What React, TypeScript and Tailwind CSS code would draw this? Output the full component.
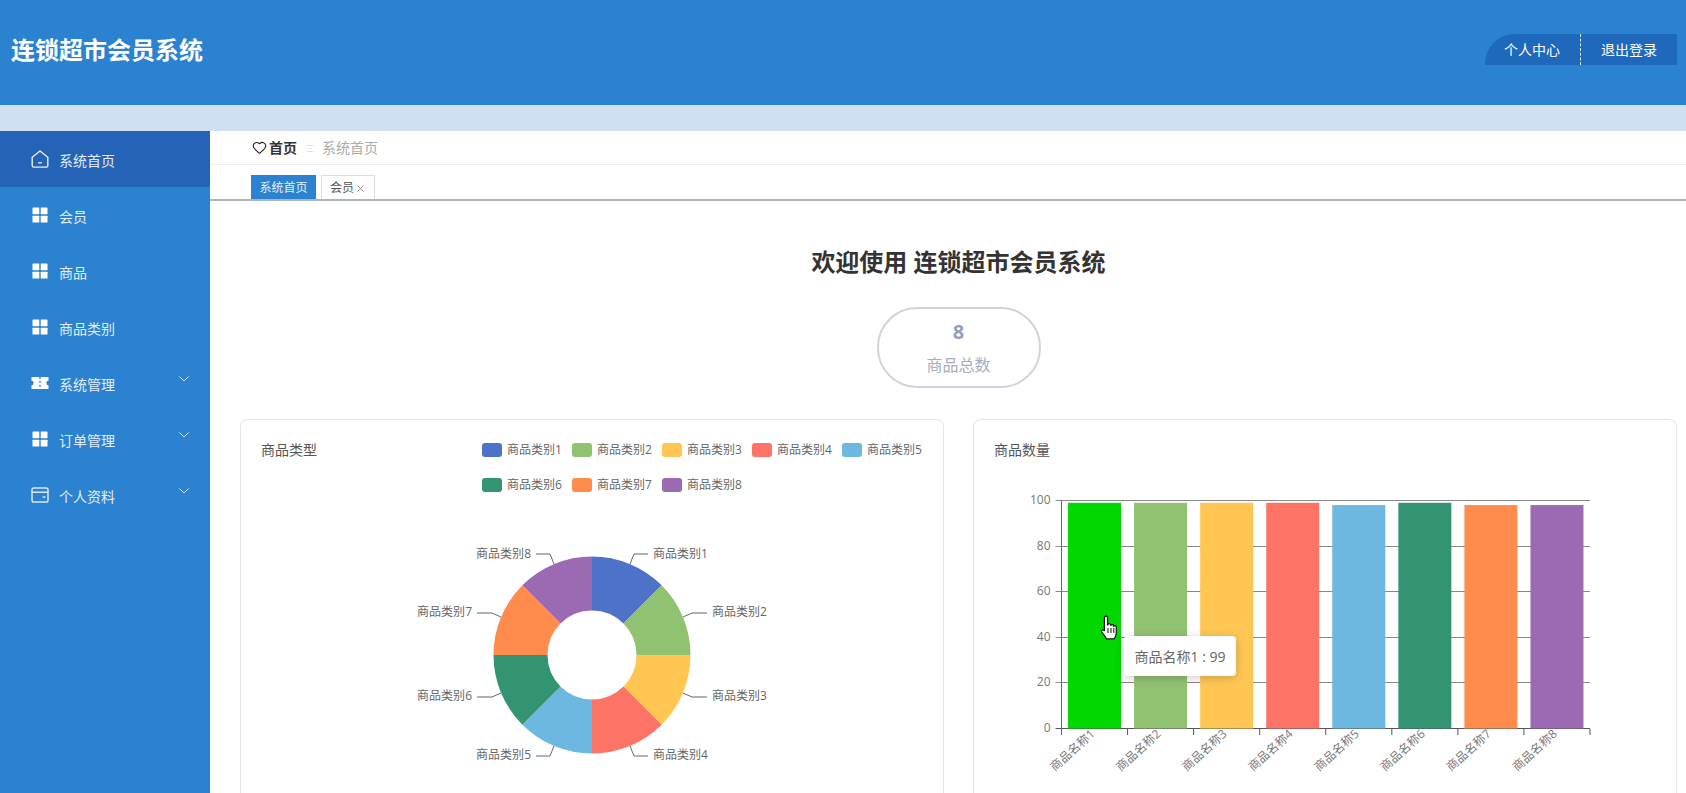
import { Heart, X } from "lucide-react";

const palette = ["#4f72c9", "#90c272", "#ffc654", "#fd7366", "#6cb8e0", "#339472", "#ff8c4d", "#9c6ab3"];
const barColors = ["#00d800", ...palette.slice(1)];
const barValues = [99, 99, 99, 99, 98, 99, 98, 98];

const pieLabels = [
  { points: "630,564 634,554 648,554", x: 653, y: 553, anchor: "start" },
  { points: "683,617 692,613 707,613", x: 712, y: 611, anchor: "start" },
  { points: "683,693 692,697 707,697", x: 712, y: 695, anchor: "start" },
  { points: "630,746 634,756 648,756", x: 653, y: 754, anchor: "start" },
  { points: "554,746 550,756 536,756", x: 531, y: 754, anchor: "end" },
  { points: "501,693 492,697 477,697", x: 472, y: 695, anchor: "end" },
  { points: "501,617 492,613 477,613", x: 472, y: 611, anchor: "end" },
  { points: "554,564 550,554 536,554", x: 531, y: 553, anchor: "end" },
];

function GridIcon() {
  return (
    <svg width="18" height="18" viewBox="0 0 18 18" fill="#fff">
      <rect x="1.5" y="1.5" width="6.8" height="6.8" rx="0.6" />
      <rect x="9.7" y="1.5" width="6.8" height="6.8" rx="0.6" />
      <rect x="1.5" y="9.7" width="6.8" height="6.8" rx="0.6" />
      <rect x="9.7" y="9.7" width="6.8" height="6.8" rx="0.6" />
    </svg>
  );
}

function HomeIcon() {
  return (
    <svg width="18" height="18" viewBox="0 0 18 18" fill="none" stroke="#e8f0fa" strokeWidth="1.4">
      <path d="M1.2 7.2 9 1l7.8 6.2v8.3a1.6 1.6 0 0 1-1.6 1.6H2.8a1.6 1.6 0 0 1-1.6-1.6z" strokeLinejoin="round" />
      <path d="M7.2 12.8h3.6" />
    </svg>
  );
}

function TicketIcon() {
  return (
    <svg width="18" height="18" viewBox="0 0 18 18" fill="#fff">
      <path d="M0.5 3h17v3.8a2.2 2.2 0 0 0 0 4.4V15H0.5v-3.8a2.2 2.2 0 0 0 0-4.4z" />
      <path d="M9 3v12" stroke="#2b82d0" strokeWidth="1.4" strokeDasharray="2 2" />
    </svg>
  );
}

function WalletIcon() {
  return (
    <svg width="18" height="18" viewBox="0 0 18 18" fill="none" stroke="#dbe8f6" strokeWidth="1.5">
      <rect x="1" y="2" width="16" height="14" rx="1.8" />
      <path d="M1 6.2h16M11.6 11h2.8" />
    </svg>
  );
}

function Chevron() {
  return (
    <svg width="12" height="12" viewBox="0 0 12 12" fill="none" stroke="#dbe8f6" strokeWidth="1">
      <path d="M1.5 3.5 6 8l4.5-4.5" />
    </svg>
  );
}

function HandCursor({ className }: { className: string }) {
  return (
    <svg width="18" height="26" viewBox="0 0 18 26" className={className}>
      <path
        d="M4.4 15.5V2.8a1.6 1.6 0 0 1 3.2 0V10l.3-.6a1.5 1.5 0 0 1 2.7.4l.2.6.2-.3a1.5 1.5 0 0 1 2.6.6l.1.6a1.4 1.4 0 0 1 2.6.7v5.7c0 2.8-1.3 4.4-2 6.2H6.6c-1-2-2.4-3.6-4.6-6.4-1.5-1.9.8-3.6 2.4-2z"
        fill="#fff"
        stroke="#111"
        strokeWidth="1.2"
        strokeLinejoin="round"
      />
      <path d="M8 13v5M11 13v5M13.8 13v5" stroke="#111" strokeWidth="1" fill="none" />
    </svg>
  );
}

const menu = [
  { label: "系统首页", icon: <HomeIcon />, active: true },
  { label: "会员", icon: <GridIcon /> },
  { label: "商品", icon: <GridIcon /> },
  { label: "商品类别", icon: <GridIcon /> },
  { label: "系统管理", icon: <TicketIcon />, more: true },
  { label: "订单管理", icon: <GridIcon />, more: true },
  { label: "个人资料", icon: <WalletIcon />, more: true },
];

function Sidebar() {
  return (
    <aside className="w-[210px] shrink-0 bg-[#2b82d0]">
      {menu.map((item) => (
        <div
          key={item.label}
          className={`flex h-[56px] items-center pl-[31px] pr-[20px] text-[14px] text-[#e3edf8] ${
            item.active ? "bg-[#2463b5]" : ""
          }`}
        >
          <span className="mr-[10px] flex w-[18px] justify-center">{item.icon}</span>
          <span className="flex-1 pt-[2px]">{item.label}</span>
          {item.more && (
            <span className="-mt-[8px]">
              <Chevron />
            </span>
          )}
        </div>
      ))}
    </aside>
  );
}

function PieChart() {
  const cx = 592;
  const cy = 655;
  const outer = 98.5;
  const inner = 44.5;

  const polar = (r: number, deg: number) => {
    const a = (deg * Math.PI) / 180;
    return `${(cx + r * Math.sin(a)).toFixed(2)} ${(cy - r * Math.cos(a)).toFixed(2)}`;
  };

  return (
    <svg viewBox="261 505 662 290" width="662" height="290" className="mt-[10px] block">
      {palette.map((color, i) => {
        const a = i * 45;
        const b = a + 45;
        const d = `M${polar(inner, a)} L${polar(outer, a)} A${outer} ${outer} 0 0 1 ${polar(outer, b)} L${polar(inner, b)} A${inner} ${inner} 0 0 0 ${polar(inner, a)} Z`;
        return <path key={color} d={d} fill={color} />;
      })}
      {pieLabels.map((item, i) => (
        <g key={i}>
          <polyline points={item.points} fill="none" stroke="#666" strokeWidth="1" />
          <text
            x={item.x}
            y={item.y}
            textAnchor={item.anchor as "start" | "end"}
            dominantBaseline="central"
            className="fill-[#666] text-[12px]"
          >
            商品类别{i + 1}
          </text>
        </g>
      ))}
    </svg>
  );
}

function BarChart() {
  const left = 1061.5;
  const right = 1590;
  const bottom = 728.5;
  const top = 500.5;
  const band = (right - left) / 8;
  const ticks = [0, 20, 40, 60, 80, 100];

  return (
    <svg viewBox="994 475 662 320" width="662" height="320" className="block">
      {ticks.map((t) => {
        const y = Math.round(bottom - (t / 100) * (bottom - top) - 0.5) + 0.5;
        return (
          <g key={t}>
            <line x1={left - 6} x2={right} y1={y} y2={y} stroke={t === 0 ? "#555" : "#888"} strokeWidth="1" />
            <text x={left - 11} y={y - 1} textAnchor="end" dominantBaseline="central" className="fill-[#777] text-[12px]">
              {t}
            </text>
          </g>
        );
      })}
      <line x1={left} x2={left} y1={top} y2={735} stroke="#666" strokeWidth="1" />
      {barValues.map((value, i) => {
        const barTop = bottom - (value / 100) * (bottom - top);
        const center = left + band * (i + 0.5);
        return (
          <g key={i}>
            <rect x={center - 26.5} y={barTop} width="53" height={bottom - barTop} fill={barColors[i]} />
            <line x1={left + band * (i + 1)} x2={left + band * (i + 1)} y1={729} y2={735} stroke="#555" strokeWidth="1" />
            <text
              x={center + 1}
              y={735}
              textAnchor="end"
              transform={`rotate(-42 ${center + 1} 735)`}
              className="fill-[#777] text-[12px]"
            >
              商品名称{i + 1}
            </text>
          </g>
        );
      })}
    </svg>
  );
}

export default function App() {
  return (
    <div className="flex h-[793px] flex-col overflow-hidden bg-white font-['Open_Sans','Noto_Sans_CJK_SC',sans-serif]">
      <header className="flex h-[105px] shrink-0 items-center justify-between bg-[#2b82d0] pl-[11px] pr-[9px]">
        <h1 className="-mt-[6px] text-[24px] font-bold text-white">连锁超市会员系统</h1>
        <div className="-mt-[7px] flex h-[31px] w-[192px] items-center rounded-tl-[30px] bg-[#1e69bb] text-[14px] text-white">
          <span className="w-[96px] border-r border-dashed border-[#dbe8f6] pl-[19px] leading-[31px]">个人中心</span>
          <span className="pl-[20px]">退出登录</span>
        </div>
      </header>
      <div className="h-[26px] shrink-0 bg-[#d0e0f2]" />

      <div className="flex min-h-0 flex-1">
        <Sidebar />
        <main className="min-w-0 flex-1">
          <div className="flex h-[34px] items-center border-b border-[#eeeeee] pl-[42px] text-[14px]">
            <Heart size={15} strokeWidth={1.8} className="mr-[2px] text-[#222]" />
            <span className="font-bold text-[#333]">首页</span>
            <span className="ml-[9px] mr-[8px] text-[8px] leading-none text-[#cccccc]">三</span>
            <span className="text-[#aaaaaa]">系统首页</span>
          </div>
          <div className="flex h-[36px] items-end gap-[5px] border-b-2 border-[#aeb6bd] pl-[41px] text-[12px]">
            <span className="flex h-[24px] w-[65px] items-center justify-center bg-[#2b82d0] pt-[1px] text-[#e8f0fa]">系统首页</span>
            <span className="flex h-[24px] w-[54px] items-center justify-center gap-[1px] border border-b-0 border-[#dddddd] pt-[1px] text-[#555]">
              会员
              <X size={11} className="text-[#888]" />
            </span>
          </div>

          <div className="pl-[30px] pr-[9px]">
            <h2 className="mt-[45px] text-center text-[24px] leading-[32px] font-bold text-[#333]">
              欢迎使用 连锁超市会员系统
            </h2>
            <div className="mx-auto mt-[29px] flex h-[81px] w-[164px] flex-col items-center rounded-[40px] border-2 border-[#d0d3de]">
              <span className="mt-[8px] text-[20px] leading-[30px] font-bold text-[#8f9fbd]">8</span>
              <span className="mt-[7px] text-[16px] leading-[22px] text-[#a3adc2]">商品总数</span>
            </div>

            <div className="mt-[31px] grid grid-cols-[704px_704px] gap-[29px]">
              <section className="h-[420px] rounded-[8px] border border-[#e2e4e8] p-[20px]">
                <div className="flex justify-between">
                  <h3 className="text-[14px] leading-[20px] text-[#555]">商品类型</h3>
                  <div className="flex w-[441px] flex-wrap gap-x-[10px] gap-y-[15px]">
                    {palette.map((color, i) => (
                      <div key={color} className="flex h-[20px] w-[80px] items-center gap-[5px] text-[12px] text-[#666]">
                        <span className="h-[14px] w-[20px] shrink-0 rounded-[3px]" style={{ backgroundColor: color }} />
                        <span className="whitespace-nowrap">商品类别{i + 1}</span>
                      </div>
                    ))}
                  </div>
                </div>
                <PieChart />
              </section>

              <section className="h-[420px] rounded-[8px] border border-[#e2e4e8] p-[20px]">
                <h3 className="text-[14px] leading-[20px] text-[#555]">商品数量</h3>
                <div className="relative mt-[15px]">
                  <BarChart />
                  <HandCursor className="absolute left-[106px] top-[140px]" />
                  <div className="absolute left-[130px] top-[161px] flex h-[40px] w-[112px] items-center justify-center rounded-[4px] bg-white text-[14px] text-[#666] shadow-[0_2px_10px_rgba(0,0,0,0.2)]">
                    商品名称1 : 99
                  </div>
                </div>
              </section>
            </div>
          </div>
        </main>
      </div>
    </div>
  );
}
